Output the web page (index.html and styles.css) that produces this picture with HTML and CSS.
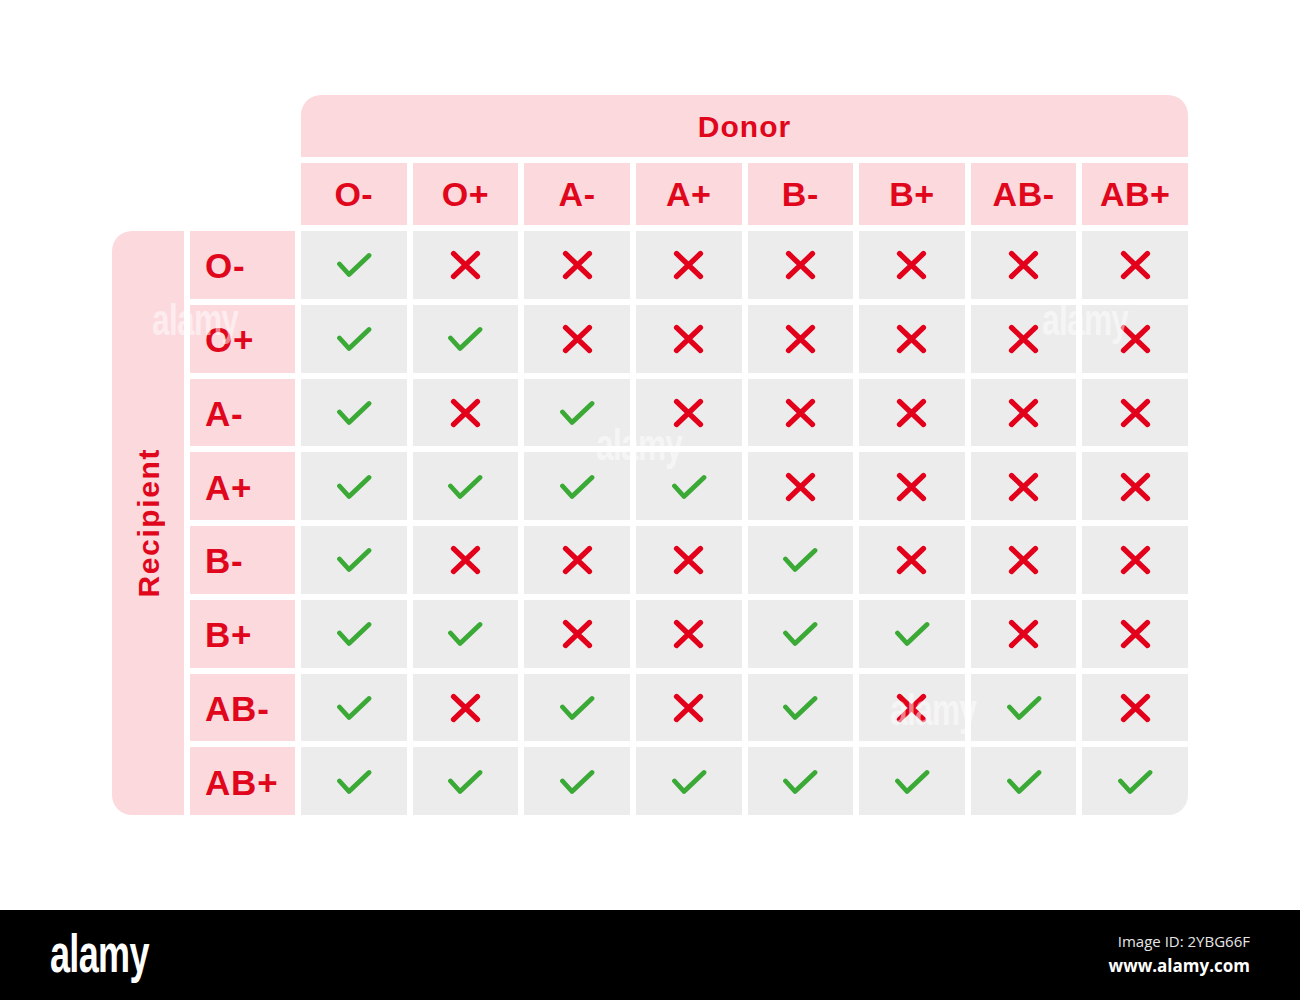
FILE: index.html
```html
<!DOCTYPE html>
<html lang="en">
<head>
<meta charset="utf-8">
<title>Blood type compatibility</title>
<link rel="stylesheet" href="styles.css">
</head>
<body>
<svg class="defs" width="0" height="0" aria-hidden="true">
  <defs>
    <symbol id="chk" viewBox="0 0 36 26">
      <polyline points="3.5,12 13,22.5 33,3.5" fill="none" stroke="#3aa935" stroke-width="4.8" stroke-linecap="round" stroke-linejoin="round"/>
    </symbol>
    <symbol id="crs" viewBox="0 0 31 30">
      <path d="M3.5 3.5 L27.5 26.5 M27.5 3.5 L3.5 26.5" fill="none" stroke="#e2001a" stroke-width="5.2" stroke-linecap="round"/>
    </symbol>
  </defs>
</svg>
<main class="page">
  <div class="chart">
    <div class="corner corner-top"></div>
    <div class="donor">Donor</div>
    <div class="corner corner-bottom"></div>
    <div class="colhead">O-</div><div class="colhead">O+</div><div class="colhead">A-</div><div class="colhead">A+</div><div class="colhead">B-</div><div class="colhead">B+</div><div class="colhead">AB-</div><div class="colhead">AB+</div>
    <div class="recipient"><span>Recipient</span></div>

    <div class="rowhead">O-</div>
    <div class="cell"><svg class="ck"><use href="#chk"/></svg></div>
    <div class="cell"><svg class="cx"><use href="#crs"/></svg></div>
    <div class="cell"><svg class="cx"><use href="#crs"/></svg></div>
    <div class="cell"><svg class="cx"><use href="#crs"/></svg></div>
    <div class="cell"><svg class="cx"><use href="#crs"/></svg></div>
    <div class="cell"><svg class="cx"><use href="#crs"/></svg></div>
    <div class="cell"><svg class="cx"><use href="#crs"/></svg></div>
    <div class="cell"><svg class="cx"><use href="#crs"/></svg></div>

    <div class="rowhead">O+</div>
    <div class="cell"><svg class="ck"><use href="#chk"/></svg></div>
    <div class="cell"><svg class="ck"><use href="#chk"/></svg></div>
    <div class="cell"><svg class="cx"><use href="#crs"/></svg></div>
    <div class="cell"><svg class="cx"><use href="#crs"/></svg></div>
    <div class="cell"><svg class="cx"><use href="#crs"/></svg></div>
    <div class="cell"><svg class="cx"><use href="#crs"/></svg></div>
    <div class="cell"><svg class="cx"><use href="#crs"/></svg></div>
    <div class="cell"><svg class="cx"><use href="#crs"/></svg></div>

    <div class="rowhead">A-</div>
    <div class="cell"><svg class="ck"><use href="#chk"/></svg></div>
    <div class="cell"><svg class="cx"><use href="#crs"/></svg></div>
    <div class="cell"><svg class="ck"><use href="#chk"/></svg></div>
    <div class="cell"><svg class="cx"><use href="#crs"/></svg></div>
    <div class="cell"><svg class="cx"><use href="#crs"/></svg></div>
    <div class="cell"><svg class="cx"><use href="#crs"/></svg></div>
    <div class="cell"><svg class="cx"><use href="#crs"/></svg></div>
    <div class="cell"><svg class="cx"><use href="#crs"/></svg></div>

    <div class="rowhead">A+</div>
    <div class="cell"><svg class="ck"><use href="#chk"/></svg></div>
    <div class="cell"><svg class="ck"><use href="#chk"/></svg></div>
    <div class="cell"><svg class="ck"><use href="#chk"/></svg></div>
    <div class="cell"><svg class="ck"><use href="#chk"/></svg></div>
    <div class="cell"><svg class="cx"><use href="#crs"/></svg></div>
    <div class="cell"><svg class="cx"><use href="#crs"/></svg></div>
    <div class="cell"><svg class="cx"><use href="#crs"/></svg></div>
    <div class="cell"><svg class="cx"><use href="#crs"/></svg></div>

    <div class="rowhead">B-</div>
    <div class="cell"><svg class="ck"><use href="#chk"/></svg></div>
    <div class="cell"><svg class="cx"><use href="#crs"/></svg></div>
    <div class="cell"><svg class="cx"><use href="#crs"/></svg></div>
    <div class="cell"><svg class="cx"><use href="#crs"/></svg></div>
    <div class="cell"><svg class="ck"><use href="#chk"/></svg></div>
    <div class="cell"><svg class="cx"><use href="#crs"/></svg></div>
    <div class="cell"><svg class="cx"><use href="#crs"/></svg></div>
    <div class="cell"><svg class="cx"><use href="#crs"/></svg></div>

    <div class="rowhead">B+</div>
    <div class="cell"><svg class="ck"><use href="#chk"/></svg></div>
    <div class="cell"><svg class="ck"><use href="#chk"/></svg></div>
    <div class="cell"><svg class="cx"><use href="#crs"/></svg></div>
    <div class="cell"><svg class="cx"><use href="#crs"/></svg></div>
    <div class="cell"><svg class="ck"><use href="#chk"/></svg></div>
    <div class="cell"><svg class="ck"><use href="#chk"/></svg></div>
    <div class="cell"><svg class="cx"><use href="#crs"/></svg></div>
    <div class="cell"><svg class="cx"><use href="#crs"/></svg></div>

    <div class="rowhead">AB-</div>
    <div class="cell"><svg class="ck"><use href="#chk"/></svg></div>
    <div class="cell"><svg class="cx"><use href="#crs"/></svg></div>
    <div class="cell"><svg class="ck"><use href="#chk"/></svg></div>
    <div class="cell"><svg class="cx"><use href="#crs"/></svg></div>
    <div class="cell"><svg class="ck"><use href="#chk"/></svg></div>
    <div class="cell"><svg class="cx"><use href="#crs"/></svg></div>
    <div class="cell"><svg class="ck"><use href="#chk"/></svg></div>
    <div class="cell"><svg class="cx"><use href="#crs"/></svg></div>

    <div class="rowhead">AB+</div>
    <div class="cell"><svg class="ck"><use href="#chk"/></svg></div>
    <div class="cell"><svg class="ck"><use href="#chk"/></svg></div>
    <div class="cell"><svg class="ck"><use href="#chk"/></svg></div>
    <div class="cell"><svg class="ck"><use href="#chk"/></svg></div>
    <div class="cell"><svg class="ck"><use href="#chk"/></svg></div>
    <div class="cell"><svg class="ck"><use href="#chk"/></svg></div>
    <div class="cell"><svg class="ck"><use href="#chk"/></svg></div>
    <div class="cell cell-last"><svg class="ck"><use href="#chk"/></svg></div>

    <span class="wm wm1">alamy</span>
    <span class="wm wm2">alamy</span>
    <span class="wm wm3">alamy</span>
    <span class="wm wm4">alamy</span>
  </div>
</main>
<footer class="bar">
  <div class="logo">alamy</div>
  <div class="meta">
    <div class="meta-id">Image ID: 2YBG66F</div>
    <div class="meta-url">www.alamy.com</div>
  </div>
</footer>
</body>
</html>
```

FILE: styles.css
```css
html, body {
  margin: 0;
  padding: 0;
  background: #ffffff;
}

.defs {
  position: absolute;
  width: 0;
  height: 0;
  overflow: hidden;
}

.page {
  height: 910px;
  box-sizing: border-box;
  padding: 95px 0 0 112px;
}

.chart {
  position: relative;
  display: grid;
  grid-template-columns: 72px 105px repeat(8, 105.625px);
  grid-template-rows: 62px 62px repeat(8, 67.75px);
  column-gap: 6px;
  row-gap: 6px;
  width: 1076px;
  font-family: "Liberation Sans", Arial, sans-serif;
  font-weight: bold;
  color: #e0061c;
}

.corner {
  grid-column: 1 / 3;
}

.corner-top { grid-row: 1; }
.corner-bottom { grid-row: 2; }

.donor {
  grid-column: 3 / 11;
  grid-row: 1;
  background: #fcd9dd;
  border-radius: 20px 20px 0 0;
  display: flex;
  align-items: center;
  justify-content: center;
  font-size: 30px;
  letter-spacing: 1px;
  padding-top: 2px;
}

.colhead {
  grid-row: 2;
  background: #fcd9dd;
  display: flex;
  align-items: center;
  justify-content: center;
  font-size: 34px;
  letter-spacing: 0.5px;
  padding-top: 1px;
}

.recipient {
  grid-column: 1;
  grid-row: 3 / 11;
  background: #fcd9dd;
  border-radius: 20px 0 0 20px;
  display: flex;
  align-items: center;
  justify-content: center;
}

.recipient span {
  writing-mode: vertical-rl;
  transform: rotate(180deg);
  font-size: 30px;
  letter-spacing: 1.6px;
  margin-left: 2px;
}

.rowhead {
  grid-column: 2;
  background: #fcd9dd;
  display: flex;
  align-items: center;
  padding-left: 15px;
  padding-top: 3px;
  font-size: 35px;
  letter-spacing: 0.8px;
}

.cell {
  background: #ececec;
  display: flex;
  align-items: center;
  justify-content: center;
  padding-top: 1px;
}

.cell-last {
  border-radius: 0 0 20px 0;
}

.ck {
  width: 36px;
  height: 26px;
}

.cx {
  width: 31px;
  height: 30px;
}

.wm {
  position: absolute;
  font-family: "Liberation Sans", Arial, sans-serif;
  font-weight: bold;
  font-size: 44px;
  color: rgba(255, 255, 255, 0.5);
  transform: scaleX(0.72);
  transform-origin: left top;
  letter-spacing: -1px;
  pointer-events: none;
}

.wm1 { left: 40px; top: 200px; }
.wm2 { left: 930px; top: 200px; }
.wm3 { left: 484px; top: 325px; }
.wm4 { left: 778px; top: 590px; }

.bar {
  height: 90px;
  background: #000000;
  display: flex;
  align-items: center;
  justify-content: space-between;
  padding: 0 50px;
  box-sizing: border-box;
}

.logo {
  font-family: "Liberation Sans", Arial, sans-serif;
  font-weight: bold;
  font-size: 53px;
  color: #ffffff;
  letter-spacing: -1px;
  transform: scaleX(0.68);
  transform-origin: left center;
  line-height: 1;
  margin-top: -4px;
}

.meta {
  display: flex;
  flex-direction: column;
  align-items: flex-end;
  color: #ffffff;
  font-family: "Open Sans", "Noto Sans", sans-serif;
  margin-top: -4px;
}

.meta-id {
  font-size: 15px;
  line-height: 26px;
  color: #e6e6e6;
}

.meta-url {
  font-size: 17px;
  font-weight: bold;
  line-height: 24px;
}
```
